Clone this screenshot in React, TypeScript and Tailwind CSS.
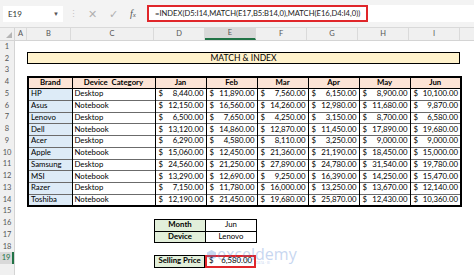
import React from 'react';

const rows: [string, string, string[]][] = [
  ['HP', 'Desktop', ['8,440.00', '11,890.00', '7,560.00', '6,150.00', '8,900.00', '10,100.00']],
  ['Asus', 'Notebook', ['12,150.00', '16,560.00', '14,260.00', '12,980.00', '11,680.00', '9,870.00']],
  ['Lenovo', 'Desktop', ['6,500.00', '7,650.00', '4,250.00', '3,150.00', '8,700.00', '6,580.00']],
  ['Dell', 'Notebook', ['13,120.00', '14,860.00', '12,870.00', '11,450.00', '17,890.00', '19,680.00']],
  ['Acer', 'Desktop', ['6,290.00', '4,580.00', '8,110.00', '3,250.00', '9,000.00', '9,000.00']],
  ['Apple', 'Notebook', ['15,060.00', '12,450.00', '21,360.00', '21,190.00', '18,450.00', '15,000.00']],
  ['Samsung', 'Desktop', ['24,560.00', '21,250.00', '27,890.00', '24,780.00', '31,540.00', '19,780.00']],
  ['MSI', 'Notebook', ['13,290.00', '12,690.00', '9,250.00', '16,390.00', '14,250.00', '15,470.00']],
  ['Razer', 'Desktop', ['7,150.00', '11,780.00', '16,000.00', '13,250.00', '13,670.00', '12,140.00']],
  ['Toshiba', 'Notebook', ['12,190.00', '21,450.00', '19,680.00', '25,870.00', '12,430.00', '10,360.00']],
];

const months = ['Jan', 'Feb', 'Mar', 'Apr', 'May', 'Jun'];

const columns = [
  { name: 'A', w: 'w-[12px]' },
  { name: 'B', w: 'w-[44px]' },
  { name: 'C', w: 'w-[83px]' },
  { name: 'D', w: 'w-[51px]' },
  { name: 'E', w: 'w-[51px]' },
  { name: 'F', w: 'w-[51px]' },
  { name: 'G', w: 'w-[51px]' },
  { name: 'H', w: 'w-[51px]' },
  { name: 'I', w: 'w-[51px]' },
];

const Money = ({ value }: { value: string }) => (
  <div className="flex justify-between pl-[3px] pr-[2px]">
    <span>$</span>
    <span>{value}</span>
  </div>
);

export default function App() {
  return (
    <div className="w-[474px] h-[275px] overflow-hidden bg-white text-black font-['Lato','Liberation_Sans',sans-serif]">
      {/* Formula bar */}
      <div className="h-[28px] flex items-center bg-[#f3f3f3] border-b border-[#d9d9d9]">
        <div className="ml-[3px] w-[60px] h-[16px] bg-white flex items-center justify-between pl-[5px] pr-[4px] text-[8px] text-[#333]">
          <span>E19</span>
          <span className="text-[6px] text-[#555]">▼</span>
        </div>
        <span className="ml-[6px] text-[9px] text-[#c4c4c4] leading-none">⋮</span>
        <div className="ml-[6px] w-[62px] h-[16px] flex items-center text-[#b0b0b0]">
          <span className="ml-[4px] text-[11px] leading-none">✕</span>
          <span className="ml-[12px] text-[11px] leading-none">✓</span>
          <span className="ml-[12px] text-[10px] italic text-[#555] font-['Liberation_Serif',serif] leading-none">
            f<span className="text-[7px]">x</span>
          </span>
        </div>
        <div className="ml-[1px] w-[221px] h-[17px] bg-white border-2 border-[#e0262a] flex items-center pl-[6px] text-[7.6px] text-[#222] whitespace-nowrap">
          =INDEX(D5:I14,MATCH(E17,B5:B14,0),MATCH(E16,D4:I4,0))
        </div>
        <div className="flex-1 h-[17px] bg-white" />
      </div>

      {/* Column headers */}
      <div className="h-[12.5px] flex bg-[#f0f0f0] border-b border-[#d4d4d4] text-[7.5px] text-[#555]">
        <div className="w-[15px] border-r border-[#d4d4d4] relative">
          <span className="absolute right-[2px] bottom-[2px] w-0 h-0 border-l-[6px] border-l-transparent border-b-[6px] border-b-[#b5b5b5]" />
        </div>
        {columns.map(c => (
          <div
            key={c.name}
            className={`${c.w} flex items-center justify-center border-r border-[#dadada] ${
              c.name === 'E' ? 'bg-[#d9d9d9] border-b-2 border-b-[#217346]' : ''
            }`}
          >
            {c.name}
          </div>
        ))}
        <div className="flex-1" />
      </div>

      {/* Sheet body */}
      <div className="flex">
        <div className="w-[15px] bg-[#f0f0f0] border-r border-[#d4d4d4] flex flex-col text-[7.5px] text-[#555] h-[235px]">
          {Array.from({ length: 19 }, (_, i) => (
            <div
              key={i}
              className={`h-[11.75px] flex items-center justify-center ${
                i === 18 ? 'bg-[#d9d9d9] text-[#217346] border-r-2 border-[#217346]' : ''
              }`}
            >
              {i + 1}
            </div>
          ))}
        </div>

        <div className="relative flex-1 flex flex-col text-[7.8px] leading-none">
          <div className="h-[11.75px]" />
          <div className="h-[11.75px] flex pl-[12px]">
            <div className="w-[433px] h-full bg-[#fff2cc] border-[1.5px] border-black flex items-center justify-center text-[8.5px]">
              MATCH &amp; INDEX
            </div>
          </div>
          <div className="h-[11.75px]" />

          {/* Main table */}
          <div className="pl-[12px]">
            <table className="table-fixed border-collapse w-[433px] border-2 border-black">
              <colgroup>
                <col className="w-[44px]" />
                <col className="w-[83px]" />
                {months.map(m => (
                  <col key={m} className="w-[51px]" />
                ))}
              </colgroup>
              <thead>
                <tr className="h-[11.75px] bg-[#fce4d6] font-bold border-b-[1.5px] border-black">
                  <th className="border-x border-black">Brand</th>
                  <th className="border-x border-black">Device&nbsp; Category</th>
                  {months.map(m => (
                    <th key={m} className="border-x border-black">
                      {m}
                    </th>
                  ))}
                </tr>
              </thead>
              <tbody>
                {rows.map(([brand, cat, vals]) => (
                  <tr key={brand} className="h-[11.75px] border-b border-[#6b6b6b]">
                    <td className="bg-[#ddebf7] border-x border-black pl-[2px]">{brand}</td>
                    <td className="border-x border-black pl-[2px]">{cat}</td>
                    {vals.map((v, i) => (
                      <td key={i} className="border-x border-black">
                        <Money value={v} />
                      </td>
                    ))}
                  </tr>
                ))}
              </tbody>
            </table>
          </div>

          <div className="h-[11.75px]" />

          {/* Lookup table */}
          <div className="pl-[139px]">
            <table className="table-fixed border-collapse w-[102px] border-[1.5px] border-black">
              <tbody>
                <tr className="h-[11.75px] border-b border-black">
                  <td className="w-[51px] bg-[#e2efda] font-bold text-center border-r border-black">Month</td>
                  <td className="w-[51px] text-center">Jun</td>
                </tr>
                <tr className="h-[11.75px]">
                  <td className="bg-[#e2efda] font-bold text-center border-r border-black">Device</td>
                  <td className="text-center">Lenovo</td>
                </tr>
              </tbody>
            </table>
          </div>

          <div className="h-[11.75px]" />

          {/* Result */}
          <div className="pl-[139px] flex h-[12.5px]">
            <div className="w-[51px] h-full bg-[#e2efda] font-bold border-[1.5px] border-black flex items-center justify-center whitespace-nowrap">
              Selling Price
            </div>
            <div className="w-[51px] h-full border-2 border-[#e0262a] flex items-center">
              <div className="w-full flex justify-between px-[2px]">
                <span>$</span>
                <span>6,580.00</span>
              </div>
            </div>
          </div>

          {/* Watermark */}
          <div className="absolute left-[192px] top-[205px] flex items-center opacity-30 pointer-events-none">
            <svg width="9" height="10" viewBox="0 0 9 10" className="mr-[1px]">
              <path d="M4.5 0 L9 2.5 L9 7.5 L4.5 10 L0 7.5 L0 2.5 Z" fill="#4a7bd0" />
            </svg>
            <div className="flex flex-col items-center">
              <span className="text-[16px] leading-none text-[#4a7bd0] font-['Open_Sans',sans-serif]">exceldemy</span>
              <span className="text-[3px] leading-none text-[#4a7bd0] tracking-wider">EXCEL · DATA · BI</span>
            </div>
          </div>
        </div>
      </div>
    </div>
  );
}
